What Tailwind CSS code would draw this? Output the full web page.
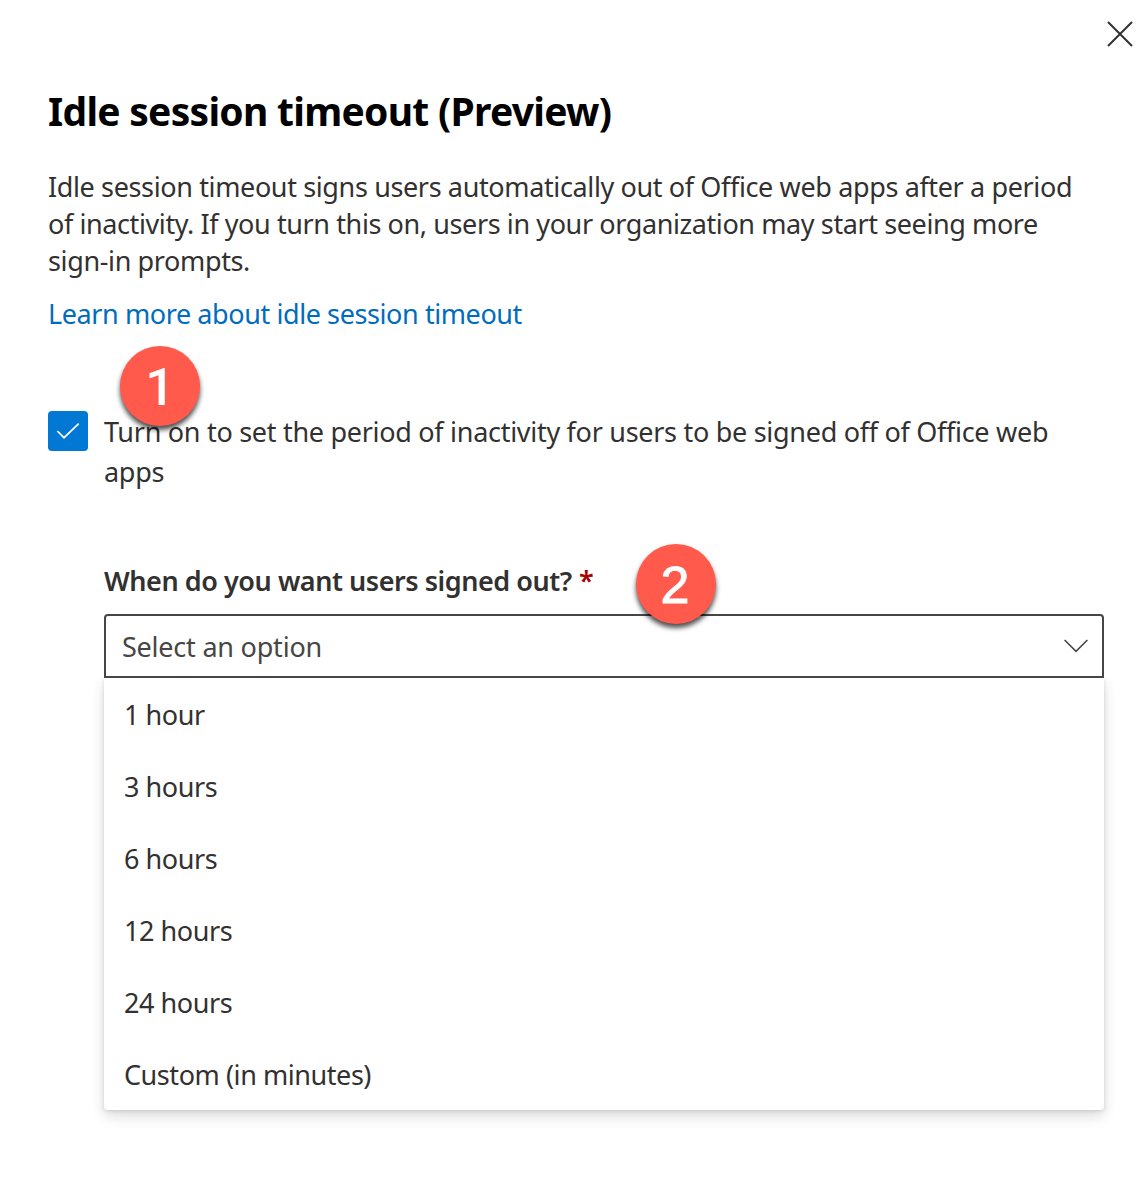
<!DOCTYPE html>
<html lang="en">
  <head>
    <meta charset="UTF-8" />
    <meta name="viewport" content="width=device-width, initial-scale=1.0" />
    <script src="https://cdn.jsdelivr.net/npm/@tailwindcss/browser@4"></script>
    <title>Idle session timeout</title>
  </head>
  <body class="bg-white text-[#323130] font-['Noto_Sans',sans-serif] text-[27px]">
    <div class="relative h-[1188px] w-[1144px] overflow-hidden pl-12 pr-10 pt-[87px]">
      <button class="absolute top-[21px] right-[11px]" aria-label="Close">
        <svg class="size-[26px]" viewBox="0 0 26 26" fill="none" stroke="#323130" stroke-width="2">
          <path d="M1 1l24 24M25 1L1 25" />
        </svg>
      </button>

      <h1 class="text-[39px] leading-[48px] font-bold tracking-[-0.72px] text-black whitespace-nowrap">Idle session timeout (Preview)</h1>

      <p class="mt-[33px] leading-[37px] tracking-[-0.37px] whitespace-nowrap">
        Idle session timeout signs users automatically out of Office web apps after a period<br />
        <span class="tracking-[-0.4px]">of inactivity. If you turn this on, users in your organization may start seeing more</span><br />
        sign-in prompts.
      </p>
      <a class="mt-4 block leading-[37px] tracking-[-0.41px] text-[#006cbe]">Learn more about idle session timeout</a>

      <!-- Toggle -->
      <label class="relative mt-[79px] flex gap-4">
        <span class="flex size-10 shrink-0 items-center justify-center rounded-[4px] bg-[#0078d4]">
          <svg class="h-5 w-6" viewBox="0 0 24 20" fill="none" stroke="#fff" stroke-width="1.7">
            <path d="M1.3 10l6.7 6.7L22.7 2.7" />
          </svg>
        </span>
        <span class="pt-px leading-10 tracking-[-0.29px] whitespace-nowrap">Turn on to set the period of inactivity for users to be signed off of Office web<br />apps</span>
        <span class="absolute -top-[65px] left-[72px] flex size-20 items-center justify-center rounded-full bg-[#ff5a4c] pt-1 font-['Roboto',sans-serif] text-[52px] leading-none font-medium text-white shadow-[0_4px_5px_rgba(0,0,0,0.7)]">1</span>
      </label>

      <!-- Timeout dropdown -->
      <div class="relative mt-[69px] ml-14 w-[1000px]">
        <div class="flex h-[53px] leading-10 font-semibold tracking-[-0.45px] whitespace-nowrap">
          When do you want users signed out?<span class="ml-[7px] text-[#a80000]">*</span>
        </div>
        <div class="relative z-10 flex h-16 items-center justify-between rounded-t-[4px] border-2 border-[#484644] bg-white pr-3.5 pl-4">
          <span class="pt-0.5 tracking-[-0.22px] text-[#484644]">Select an option</span>
          <svg class="h-3.5 w-6" viewBox="0 0 24 14" fill="none" stroke="#484644" stroke-width="1.6">
            <path d="M0.6 1l11.4 11.4L23.4 1" />
          </svg>
        </div>
        <ul class="rounded-b-[4px] bg-white pl-5 tracking-[-0.44px] shadow-[0_6px_14px_rgba(0,0,0,0.14),0_1px_4px_rgba(0,0,0,0.12)]">
          <li class="flex h-[72px] items-center pt-[3px]">1 hour</li>
          <li class="flex h-[72px] items-center pt-[3px]">3 hours</li>
          <li class="flex h-[72px] items-center pt-[3px]">6 hours</li>
          <li class="flex h-[72px] items-center pt-[3px]">12 hours</li>
          <li class="flex h-[72px] items-center pt-[3px]">24 hours</li>
          <li class="flex h-[72px] items-center pt-[3px]">Custom (in minutes)</li>
        </ul>
        <span class="absolute -top-[17px] left-[532px] z-20 flex size-20 items-center justify-center rounded-full bg-[#ff5a4c] pt-0.5 pr-0.5 font-['Liberation_Sans',sans-serif] text-[52px] leading-none text-white [-webkit-text-stroke:1px_white] shadow-[0_4px_5px_rgba(0,0,0,0.7)]">2</span>
      </div>
    </div>
  </body>
</html>
